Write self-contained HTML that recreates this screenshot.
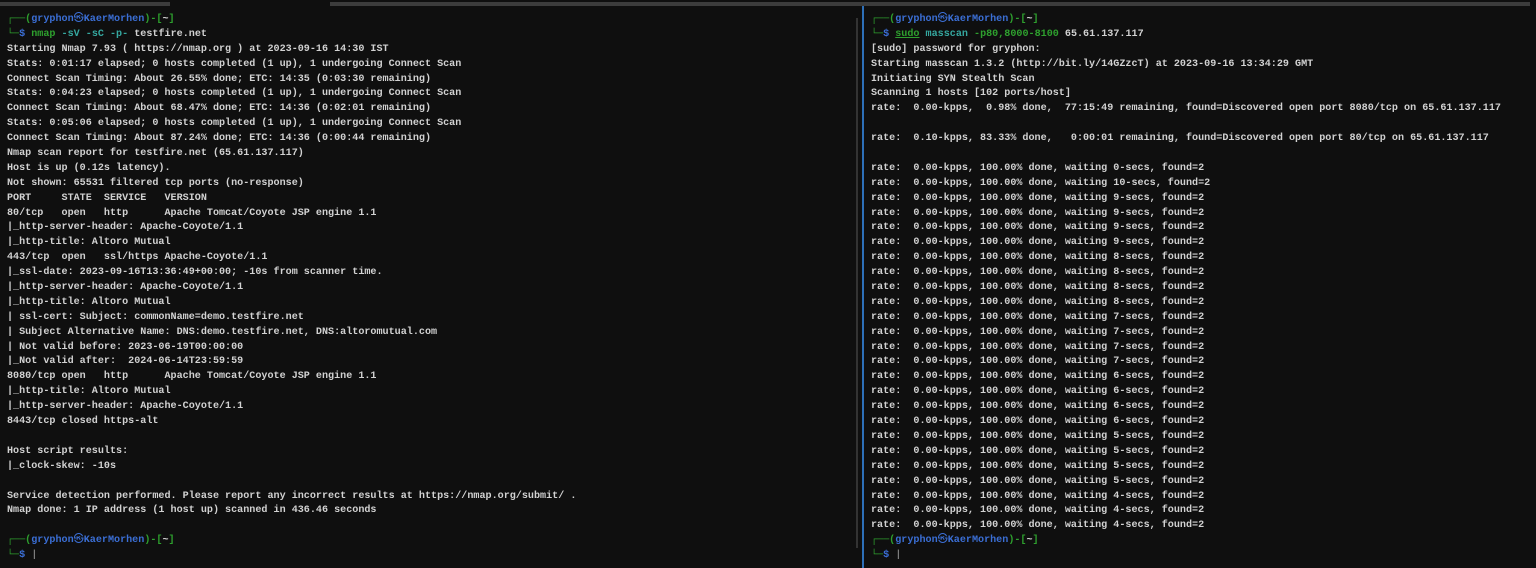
<!DOCTYPE html>
<html><head><meta charset="utf-8"><style>
html,body{margin:0;padding:0;background:#0f0f0f;width:1536px;height:568px;overflow:hidden}
.t{position:absolute;top:13px;font-family:"Liberation Mono","DejaVu Sans Mono","Noto Sans CJK JP",monospace;font-size:10.1px;line-height:14.89px;color:#d2d2d2;white-space:pre;font-weight:bold;letter-spacing:0}
.g{color:#2ea12e}.b{color:#3b6fd6}.c{color:#35a8a0}.u{text-decoration:underline}
.bar{position:absolute;top:2px;height:4px;background:#3c3c3c}
</style></head><body>
<div class="bar" style="left:0;width:170px"></div>
<div class="bar" style="left:330px;width:1200px"></div>
<div style="position:absolute;left:856px;top:18px;width:2px;height:530px;background:#333"></div>
<div style="position:absolute;left:862px;top:6px;width:2px;height:562px;background:#2d6fb8"></div>
<div class="t" style="left:7px"><span class="g">┌──(</span><span class="b">gryphon㉿KaerMorhen</span><span class="g">)-[</span>~<span class="g">]</span>
<span class="g">└─</span><span class="b">$</span> <span class="g">nmap</span> <span class="c">-sV -sC -p-</span> testfire.net
Starting Nmap 7.93 ( https://nmap.org ) at 2023-09-16 14:30 IST
Stats: 0:01:17 elapsed; 0 hosts completed (1 up), 1 undergoing Connect Scan
Connect Scan Timing: About 26.55% done; ETC: 14:35 (0:03:30 remaining)
Stats: 0:04:23 elapsed; 0 hosts completed (1 up), 1 undergoing Connect Scan
Connect Scan Timing: About 68.47% done; ETC: 14:36 (0:02:01 remaining)
Stats: 0:05:06 elapsed; 0 hosts completed (1 up), 1 undergoing Connect Scan
Connect Scan Timing: About 87.24% done; ETC: 14:36 (0:00:44 remaining)
Nmap scan report for testfire.net (65.61.137.117)
Host is up (0.12s latency).
Not shown: 65531 filtered tcp ports (no-response)
PORT     STATE  SERVICE   VERSION
80/tcp   open   http      Apache Tomcat/Coyote JSP engine 1.1
|_http-server-header: Apache-Coyote/1.1
|_http-title: Altoro Mutual
443/tcp  open   ssl/https Apache-Coyote/1.1
|_ssl-date: 2023-09-16T13:36:49+00:00; -10s from scanner time.
|_http-server-header: Apache-Coyote/1.1
|_http-title: Altoro Mutual
| ssl-cert: Subject: commonName=demo.testfire.net
| Subject Alternative Name: DNS:demo.testfire.net, DNS:altoromutual.com
| Not valid before: 2023-06-19T00:00:00
|_Not valid after:  2024-06-14T23:59:59
8080/tcp open   http      Apache Tomcat/Coyote JSP engine 1.1
|_http-title: Altoro Mutual
|_http-server-header: Apache-Coyote/1.1
8443/tcp closed https-alt

Host script results:
|_clock-skew: -10s

Service detection performed. Please report any incorrect results at https://nmap.org/submit/ .
Nmap done: 1 IP address (1 host up) scanned in 436.46 seconds

<span class="g">┌──(</span><span class="b">gryphon㉿KaerMorhen</span><span class="g">)-[</span>~<span class="g">]</span>
<span class="g">└─</span><span class="b">$</span> <span style="font-weight:normal;color:#aaa">|</span></div>
<div class="t" style="left:871px"><span class="g">┌──(</span><span class="b">gryphon㉿KaerMorhen</span><span class="g">)-[</span>~<span class="g">]</span>
<span class="g">└─</span><span class="b">$</span> <span class="g u">sudo</span> <span class="c">masscan</span> <span class="g">-p80,8000-8100</span> 65.61.137.117
[sudo] password for gryphon:
Starting masscan 1.3.2 (http://bit.ly/14GZzcT) at 2023-09-16 13:34:29 GMT
Initiating SYN Stealth Scan
Scanning 1 hosts [102 ports/host]
rate:  0.00-kpps,  0.98% done,  77:15:49 remaining, found=Discovered open port 8080/tcp on 65.61.137.117

rate:  0.10-kpps, 83.33% done,   0:00:01 remaining, found=Discovered open port 80/tcp on 65.61.137.117

rate:  0.00-kpps, 100.00% done, waiting 0-secs, found=2
rate:  0.00-kpps, 100.00% done, waiting 10-secs, found=2
rate:  0.00-kpps, 100.00% done, waiting 9-secs, found=2
rate:  0.00-kpps, 100.00% done, waiting 9-secs, found=2
rate:  0.00-kpps, 100.00% done, waiting 9-secs, found=2
rate:  0.00-kpps, 100.00% done, waiting 9-secs, found=2
rate:  0.00-kpps, 100.00% done, waiting 8-secs, found=2
rate:  0.00-kpps, 100.00% done, waiting 8-secs, found=2
rate:  0.00-kpps, 100.00% done, waiting 8-secs, found=2
rate:  0.00-kpps, 100.00% done, waiting 8-secs, found=2
rate:  0.00-kpps, 100.00% done, waiting 7-secs, found=2
rate:  0.00-kpps, 100.00% done, waiting 7-secs, found=2
rate:  0.00-kpps, 100.00% done, waiting 7-secs, found=2
rate:  0.00-kpps, 100.00% done, waiting 7-secs, found=2
rate:  0.00-kpps, 100.00% done, waiting 6-secs, found=2
rate:  0.00-kpps, 100.00% done, waiting 6-secs, found=2
rate:  0.00-kpps, 100.00% done, waiting 6-secs, found=2
rate:  0.00-kpps, 100.00% done, waiting 6-secs, found=2
rate:  0.00-kpps, 100.00% done, waiting 5-secs, found=2
rate:  0.00-kpps, 100.00% done, waiting 5-secs, found=2
rate:  0.00-kpps, 100.00% done, waiting 5-secs, found=2
rate:  0.00-kpps, 100.00% done, waiting 5-secs, found=2
rate:  0.00-kpps, 100.00% done, waiting 4-secs, found=2
rate:  0.00-kpps, 100.00% done, waiting 4-secs, found=2
rate:  0.00-kpps, 100.00% done, waiting 4-secs, found=2
<span class="g">┌──(</span><span class="b">gryphon㉿KaerMorhen</span><span class="g">)-[</span>~<span class="g">]</span>
<span class="g">└─</span><span class="b">$</span> <span style="font-weight:normal;color:#aaa">|</span></div>
</body></html>
